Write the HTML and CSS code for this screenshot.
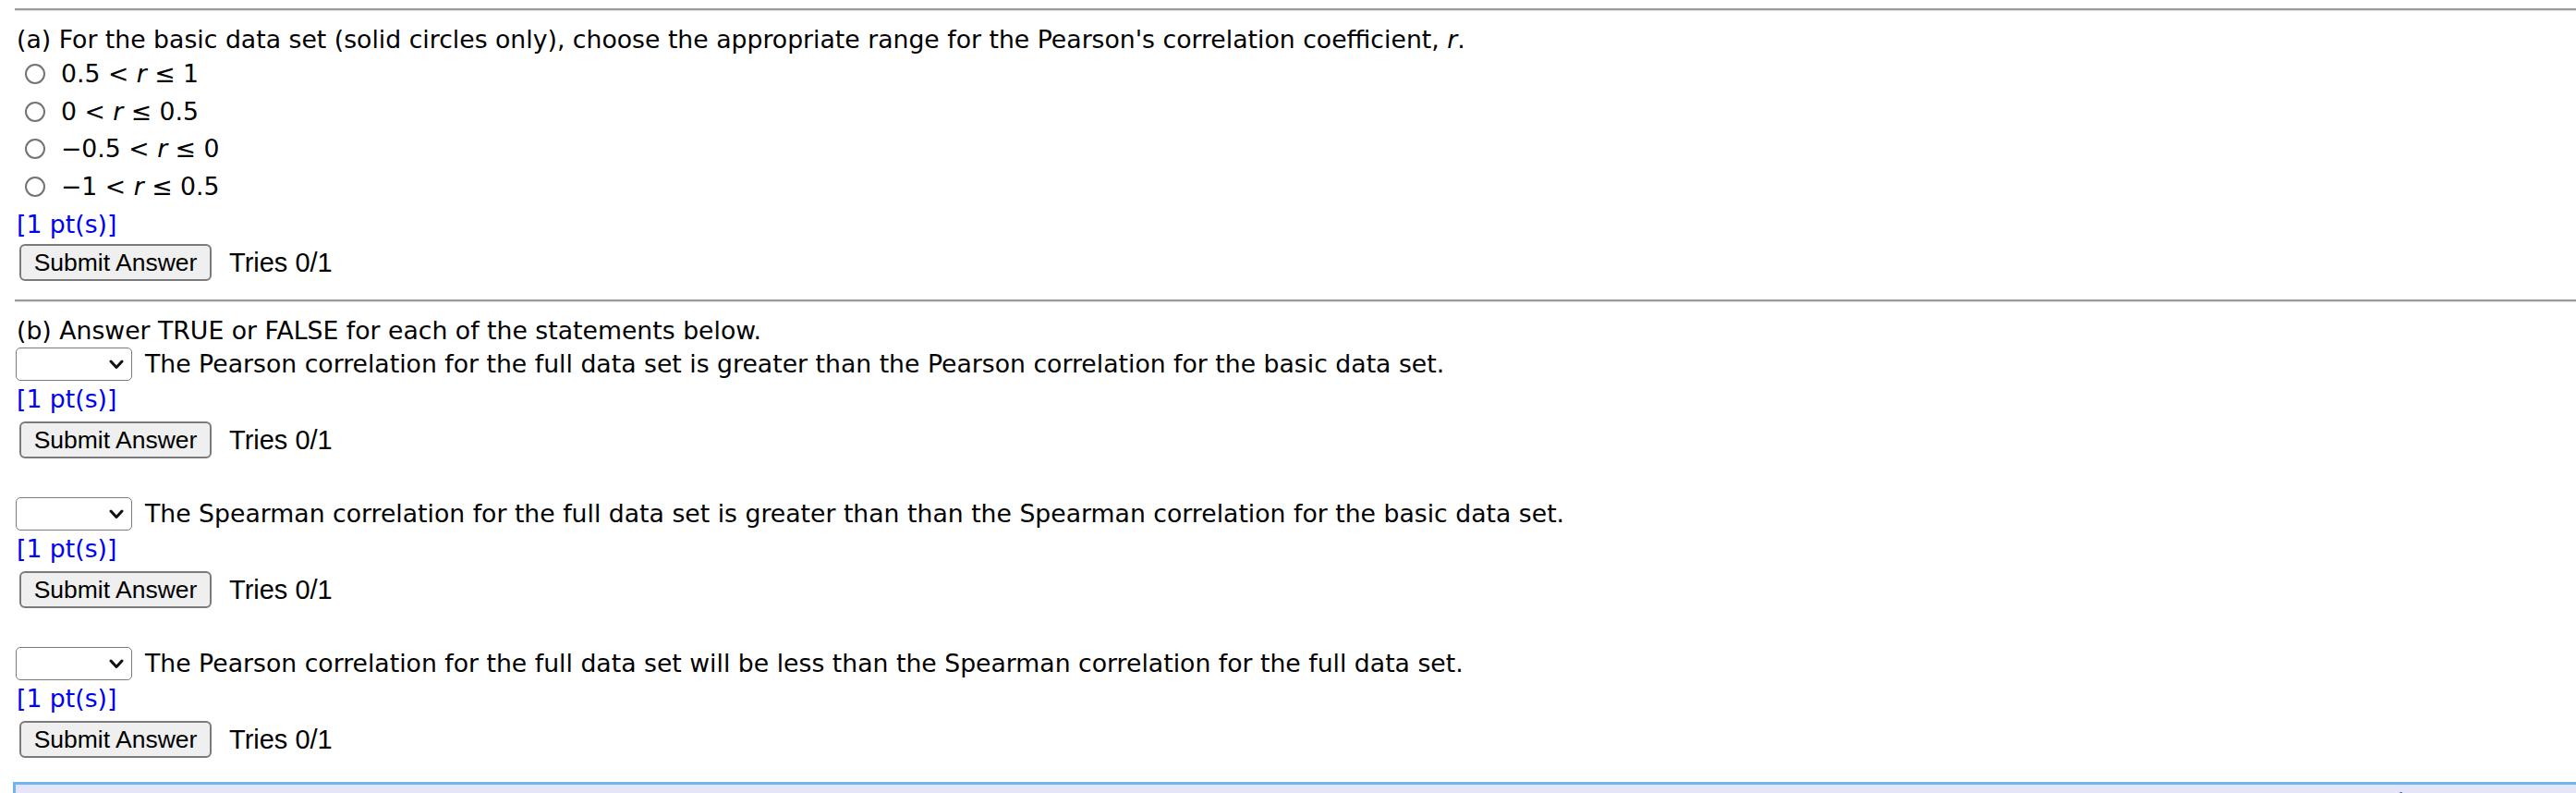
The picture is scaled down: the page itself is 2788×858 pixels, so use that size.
FILE: index.html
```html
<!DOCTYPE html>
<html>
<head>
<meta charset="utf-8">
<link rel="stylesheet" href="styles.css">
</head>
<body>
<div class="page">
  <hr class="rule first">
  <section class="part part-a">
    <div class="question">(a) For the basic data set (solid circles only), choose the appropriate range for the Pearson's correlation coefficient, <i>r</i>.</div>
    <div class="options">
      <div class="option"><span class="radio"></span><span class="opt-text">0.5 &lt; <i>r</i> ≤ 1</span></div>
      <div class="option"><span class="radio"></span><span class="opt-text">0 &lt; <i>r</i> ≤ 0.5</span></div>
      <div class="option"><span class="radio"></span><span class="opt-text">−0.5 &lt; <i>r</i> ≤ 0</span></div>
      <div class="option"><span class="radio"></span><span class="opt-text">−1 &lt; <i>r</i> ≤ 0.5</span></div>
    </div>
    <div class="pts">[1 pt(s)]</div>
    <div class="submit-row a"><button class="submit">Submit Answer</button><span class="tries">Tries 0/1</span></div>
  </section>
  <hr class="rule second">
  <section class="part part-b">
    <div class="question">(b) Answer TRUE or FALSE for each of the statements below.</div>
    <div class="statement first-st">
      <div class="statement-row"><div class="select"><svg class="chev" width="16" height="11" viewBox="0 0 16 11"><polyline points="2,2 8,8.5 14,2" fill="none" stroke="#111" stroke-width="3" stroke-linecap="round" stroke-linejoin="round"/></svg></div><span class="st-text">The Pearson correlation for the full data set is greater than the Pearson correlation for the basic data set.</span></div>
      <div class="pts">[1 pt(s)]</div>
      <div class="submit-row b"><button class="submit">Submit Answer</button><span class="tries">Tries 0/1</span></div>
    </div>
    <div class="statement">
      <div class="statement-row"><div class="select"><svg class="chev" width="16" height="11" viewBox="0 0 16 11"><polyline points="2,2 8,8.5 14,2" fill="none" stroke="#111" stroke-width="3" stroke-linecap="round" stroke-linejoin="round"/></svg></div><span class="st-text">The Spearman correlation for the full data set is greater than than the Spearman correlation for the basic data set.</span></div>
      <div class="pts">[1 pt(s)]</div>
      <div class="submit-row b"><button class="submit">Submit Answer</button><span class="tries">Tries 0/1</span></div>
    </div>
    <div class="statement">
      <div class="statement-row"><div class="select"><svg class="chev" width="16" height="11" viewBox="0 0 16 11"><polyline points="2,2 8,8.5 14,2" fill="none" stroke="#111" stroke-width="3" stroke-linecap="round" stroke-linejoin="round"/></svg></div><span class="st-text">The Pearson correlation for the full data set will be less than the Spearman correlation for the full data set.</span></div>
      <div class="pts">[1 pt(s)]</div>
      <div class="submit-row b"><button class="submit">Submit Answer</button><span class="tries">Tries 0/1</span></div>
    </div>
  </section>
  <div class="next-box"><span class="next-mark"></span></div>
</div>
</body>
</html>
```

FILE: styles.css
```css
html, body {
  margin: 0;
  padding: 0;
  background: #ffffff;
}
body {
  font-family: "DejaVu Sans", Verdana, sans-serif;
  font-size: 26.7px;
  color: #000;
  overflow: hidden;
  height: 858px;
}
.page {
  padding: 9px 0 0 16px;
}
.rule {
  margin: 0;
  height: 0;
  border: 0;
  border-top: 2px solid #9a9a9a;
  border-bottom: 1px solid #e2e2e2;
}
.rule.second {
  margin-top: 20px;
}
.part {
  padding-left: 2px;
}
.question {
  margin-top: 16px;
  line-height: 30px;
  white-space: nowrap;
}
.options {
  margin-top: 2px;
}
.option {
  height: 40.5px;
  display: flex;
  align-items: center;
  padding-left: 9px;
}
.radio {
  width: 22px;
  height: 22px;
  box-sizing: border-box;
  border: 2px solid #737373;
  border-radius: 50%;
  background: #fff;
  flex: none;
}
.opt-text {
  margin-left: 17px;
  line-height: 30px;
}
.pts {
  color: #0000f5;
  line-height: 30px;
}
.part-a .pts {
  margin-top: 6px;
}
.submit-row {
  display: flex;
  align-items: center;
  padding-left: 3px;
}
.submit-row.a {
  margin-top: 6px;
}
.submit-row.b {
  margin-top: 9px;
}
.submit {
  font-family: "Liberation Sans", Arial, sans-serif;
  font-size: 26.5px;
  line-height: 30px;
  color: #000;
  background: #efefef;
  border: 2px solid #7b7b7b;
  border-radius: 6px;
  padding: 3px 0;
  height: 40px;
  box-sizing: border-box;
  width: 208px;
  white-space: nowrap;
  text-align: center;
}
.tries {
  font-family: "Liberation Sans", Arial, sans-serif;
  font-size: 29px;
  margin-left: 19px;
}
.statement {
  margin-top: 42px;
}
.statement.first-st {
  margin-top: 3px;
}
.statement-row {
  display: flex;
  align-items: center;
  margin-left: -1px;
  white-space: nowrap;
}
.statement .pts {
  margin-top: 5px;
}
.select {
  width: 126px;
  height: 36px;
  box-sizing: border-box;
  border: 1.8px solid #7b7b7b;
  border-radius: 5px;
  background: #fff;
  display: flex;
  align-items: center;
  justify-content: flex-end;
  padding-right: 8px;
  flex: none;
}
.chev {
  display: block;
}
.st-text {
  margin-left: 14px;
  line-height: 30px;
}
.next-box {
  margin-top: 26px;
  margin-left: -2px;
  height: 40px;
  background: #e4e4fa;
  border-top: 3px solid #74b3ee;
  border-left: 3px solid #74b3ee;
  display: flex;
  justify-content: flex-end;
  align-items: flex-start;
  padding: 8px 188px 0 0;
  box-sizing: border-box;
}
.next-mark {
  width: 3px;
  height: 6px;
  background: #3b6db3;
  border-radius: 1px;
}
```
